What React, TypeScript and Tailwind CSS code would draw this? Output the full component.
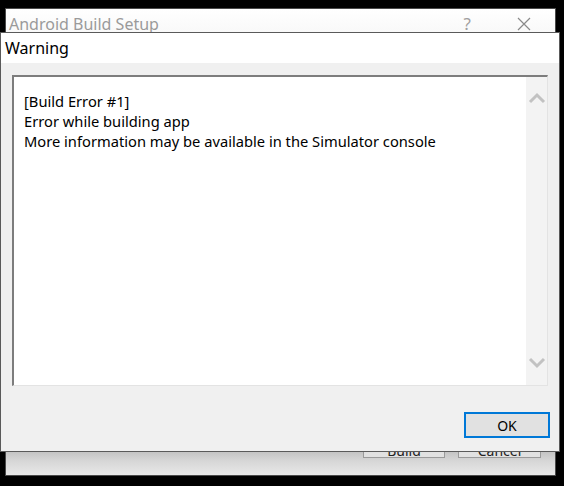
import React from "react";

function ChevronUp() {
  return (
    <svg width="18" height="12" viewBox="0 0 18 12">
      <path d="M2 10 L9 3 L16 10" fill="none" stroke="#c2c2c2" strokeWidth="3" />
    </svg>
  );
}
function ChevronDown() {
  return (
    <svg width="18" height="12" viewBox="0 0 18 12">
      <path d="M2 2 L9 9 L16 2" fill="none" stroke="#c2c2c2" strokeWidth="3" />
    </svg>
  );
}

export default function App() {
  return (
    <div
      className="relative w-[564px] h-[486px] bg-black overflow-hidden"
      style={{ fontFamily: '"Noto Sans", "Open Sans", sans-serif' }}
    >
      {/* back window */}
      <div className="absolute left-[5px] top-[8px] w-[551px] h-[468px] bg-[#f0f0f0] border border-[#4a4a4a] flex flex-col">
        <div className="h-[30px] bg-gradient-to-b from-white to-[#f7f7f7] flex items-center pl-[3px] pr-[24px]">
          <span className="text-[16px] text-[#9a9a9a] flex-1">Android Build Setup</span>
          <span className="text-[17px] text-[#a0a0a0] mr-[46px]">?</span>
          <svg width="14" height="14" viewBox="0 0 14 14">
            <path d="M1 1 L13 13 M13 1 L1 13" stroke="#8a8a8a" strokeWidth="1.2" />
          </svg>
        </div>
        <div className="flex-1" />
        <div className="h-[48px] bg-[linear-gradient(to_bottom,#f0f0f0_0%,#f0f0f0_43%,#bcbcbc_44%,#d6d6d6_70%,#e8e8e8_100%)] flex justify-end items-start gap-[13px] pr-[14px] pt-[2px]">
          <div className="w-[82px] h-[29px] border border-[#9a9a9a] bg-[#e1e1e1] flex items-center justify-center pt-[14px] text-[14px] text-[#222]">Build</div>
          <div className="w-[83px] h-[29px] border border-[#9a9a9a] bg-[#e1e1e1] flex items-center justify-center pt-[14px] text-[14px] text-[#222]">Cancel</div>
        </div>
      </div>

      {/* front window */}
      <div className="absolute left-0 top-[32px] w-[560px] h-[420px] bg-[#f0f0f0] border border-[#5a5a5a] flex flex-col">
        <div className="h-[30px] bg-white flex items-center pl-[4px]">
          <span className="text-[16px] text-black">Warning</span>
        </div>
        <div className="flex-1 flex flex-col px-[11px] pt-[12px] pb-[13px]">
          <div className="h-[311px] bg-white border-t-2 border-l-2 border-t-[#7d7d7d] border-l-[#7d7d7d] border-r border-b border-r-[#e3e3e3] border-b-[#e3e3e3] flex">
            <div className="flex-1 pl-[10px] pt-[14px] text-[14.7px] leading-[20px] text-black">
              <div>[Build Error #1]</div>
              <div>Error while building app</div>
              <div>More information may be available in the Simulator console</div>
            </div>
            <div className="w-[21px] bg-[#f3f3f3] flex flex-col items-center justify-between pt-[15px] pb-[16px]">
              <ChevronUp />
              <ChevronDown />
            </div>
          </div>
          <div className="flex-1 flex justify-end items-end">
            <div className="w-[86px] h-[26px] border-2 border-[#0078d7] bg-[#e1e1e1] flex items-center justify-center text-[14px] text-black mr-[-2px]">
              OK
            </div>
          </div>
        </div>
      </div>
    </div>
  );
}
